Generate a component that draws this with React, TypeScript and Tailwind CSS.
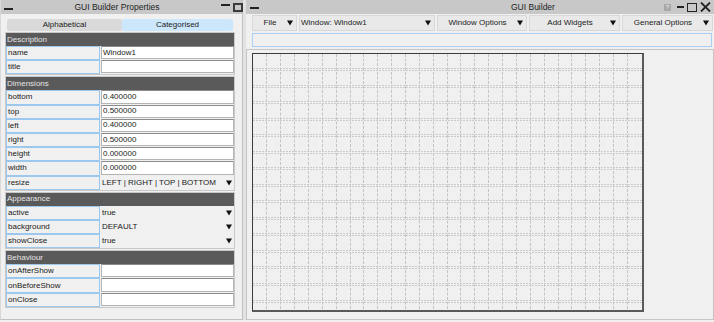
import React from 'react';

type Row = { label: string; value: string; select?: boolean };

const sections: { title: string; rows: Row[] }[] = [
  {
    title: 'Description',
    rows: [
      { label: 'name', value: 'Window1' },
      { label: 'title', value: '' },
    ],
  },
  {
    title: 'Dimensions',
    rows: [
      { label: 'bottom', value: '0.400000' },
      { label: 'top', value: '0.500000' },
      { label: 'left', value: '0.400000' },
      { label: 'right', value: '0.500000' },
      { label: 'height', value: '0.000000' },
      { label: 'width', value: '0.000000' },
      { label: 'resize', value: 'LEFT | RIGHT | TOP | BOTTOM', select: true },
    ],
  },
  {
    title: 'Appearance',
    rows: [
      { label: 'active', value: 'true', select: true },
      { label: 'background', value: 'DEFAULT', select: true },
      { label: 'showClose', value: 'true', select: true },
    ],
  },
  {
    title: 'Behaviour',
    rows: [
      { label: 'onAfterShow', value: '' },
      { label: 'onBeforeShow', value: '' },
      { label: 'onClose', value: '' },
    ],
  },
];

const menus = [
  { label: 'File', w: 'w-[45px]', left: false },
  { label: 'Window: Window1', w: 'w-[136px]', left: true },
  { label: 'Window Options', w: 'w-[90px]', left: false },
  { label: 'Add Widgets', w: 'w-[91px]', left: false },
  { label: 'General Options', w: 'w-[91px]', left: false },
];

function Arrow() {
  return (
    <svg width="6" height="6" viewBox="0 0 6 6" className="shrink-0">
      <polygon points="0,0.5 6,0.5 3,5.5" fill="#111" />
    </svg>
  );
}

function PropRow({ row }: { row: Row }) {
  return (
    <div className="flex h-[14.2px]">
      <div className="w-[94px] shrink-0 border border-[#9cc8ee] pl-[1px] flex items-center">{row.label}</div>
      {row.select ? (
        <div className="flex-1 ml-[1px] flex items-center justify-between pl-[1px] pr-[2px]">
          <span>{row.value}</span>
          <Arrow />
        </div>
      ) : (
        <div className="flex-1 ml-[1px] mb-[1px] bg-white border border-[#b4b4b4] border-t-[#8c8c8c] flex items-center pl-[1px]">
          {row.value}
        </div>
      )}
    </div>
  );
}

function Grid() {
  const w = 389;
  const h = 256;
  const xs = Array.from({ length: 27 }, (_, k) => Math.round(13.3 + 13.87 * k) + 0.5);
  const ys = Array.from({ length: 15 }, (_, k) => Math.floor(15.5 + 16.54 * k));
  return (
    <svg width={w} height={h} className="block">
      {xs.map((x) => (
        <line key={'v' + x} x1={x} y1={0} x2={x} y2={h} stroke="#c4c4c4" strokeDasharray="3 1.5" />
      ))}
      {ys.map((y) => (
        <g key={'h' + y}>
          <line x1={0} y1={y - 0.5} x2={w} y2={y - 0.5} stroke="#cbcbcb" strokeDasharray="2 1" />
          <line x1={0} y1={y + 1.5} x2={w} y2={y + 1.5} stroke="#cbcbcb" strokeDasharray="2 1" />
        </g>
      ))}
    </svg>
  );
}

export default function App() {
  return (
    <div className="w-[714px] h-[322px] bg-[#f0f0f0] flex overflow-hidden font-['Liberation_Sans',Arial,sans-serif] text-[8px] text-[#1a1a1a] leading-none">
      {/* properties panel */}
      <div className="w-[243px] h-[320px] shrink-0 flex flex-col border-r border-b border-l border-[#c0c0c0] border-l-[#d8d8d8]">
        <div className="h-[14px] bg-[#c8c8c8] flex items-center relative">
          <div className="absolute left-[3px] top-[8px] w-[9px] h-[2px] bg-[#222]" />
          <div className="flex-1 text-center pr-[9px] text-[8.5px] text-[#222]">GUI Builder Properties</div>
          <div className="absolute left-[220px] top-[4px] w-[9px] h-[2px] bg-[#222]" />
          <div className="absolute left-[232px] top-[3px] w-[10px] h-[9px] border-2 border-[#3a3a3a]" />
        </div>
        <div className="flex-1 pl-[4px] pr-[7px]">
          <div className="mt-[5px] mx-[2px] h-[12px] flex">
            <div className="w-[115px] bg-[#d9d9d9] rounded-[2px] flex items-center justify-center">Alphabetical</div>
            <div className="flex-1 bg-[#cce6fb] rounded-[2px] flex items-center justify-center">Categorised</div>
          </div>
          <div className="mt-[1px] flex flex-col gap-[1px]">
            {sections.map((s) => (
              <div key={s.title} className="border border-[#c8c8c8]">
                <div className="h-[13px] bg-[#5a5a5a] text-[#e4e4e4] flex items-center pl-[1px]">{s.title}</div>
                {s.rows.map((r) => (
                  <PropRow key={r.label} row={r} />
                ))}
              </div>
            ))}
          </div>
        </div>
      </div>

      <div className="w-[3px] h-[320px] bg-[#e2e2e2] shrink-0" />

      {/* builder panel */}
      <div className="flex-1 h-[320px] flex flex-col">
        <div className="h-[14px] bg-[#c8c8c8] flex items-center relative">
          <div className="absolute left-[4px] top-[7px] w-[9px] h-[2px] bg-[#222]" />
          <div className="ml-[265px] text-[8.5px] text-[#222]">GUI Builder</div>
          <div className="ml-auto mr-[3px] flex items-center gap-[3px]">
            <div className="w-[7px] h-[7px] bg-[#a8a8a8] text-[6px] text-[#eee] flex items-center justify-center">?</div>
            <div className="w-[7px] h-[2px] bg-[#222] self-start mt-[4px] ml-[3px]" />
            <div className="w-[10px] h-[9px] border-[1.5px] border-[#222]" />
            <svg width="11" height="10" viewBox="0 0 11 10">
              <path d="M1 0.5 L10 9.5 M10 0.5 L1 9.5" stroke="#222" strokeWidth="1.8" />
            </svg>
          </div>
        </div>

        <div className="mt-[1px] ml-[6px] flex gap-[2px]">
          {menus.map((m) => (
            <div
              key={m.label}
              className={`${m.w} h-[16px] bg-[#e9e9e9] border border-[#d8d8d8] flex items-center pr-[3px]`}
            >
              <span className={m.left ? 'flex-1 pl-[1px]' : 'flex-1 text-center'}>{m.label}</span>
              <Arrow />
            </div>
          ))}
        </div>

        <div className="mt-[2px] ml-[6px] mr-[2px] h-[14px] border border-[#a8cdf0] bg-[#f0f0f0]" />

        <div className="mt-[2px] flex-1 border border-[#c4c4c4] pl-[5px] pt-[3px]">
          <div className="w-[392px] h-[259px] bg-[#f0f0f0] border border-[#3c3c3c] border-r-2 border-b-2 border-r-[#5a5a5a] border-b-[#5a5a5a]">
            <Grid />
          </div>
        </div>
      </div>
    </div>
  );
}
